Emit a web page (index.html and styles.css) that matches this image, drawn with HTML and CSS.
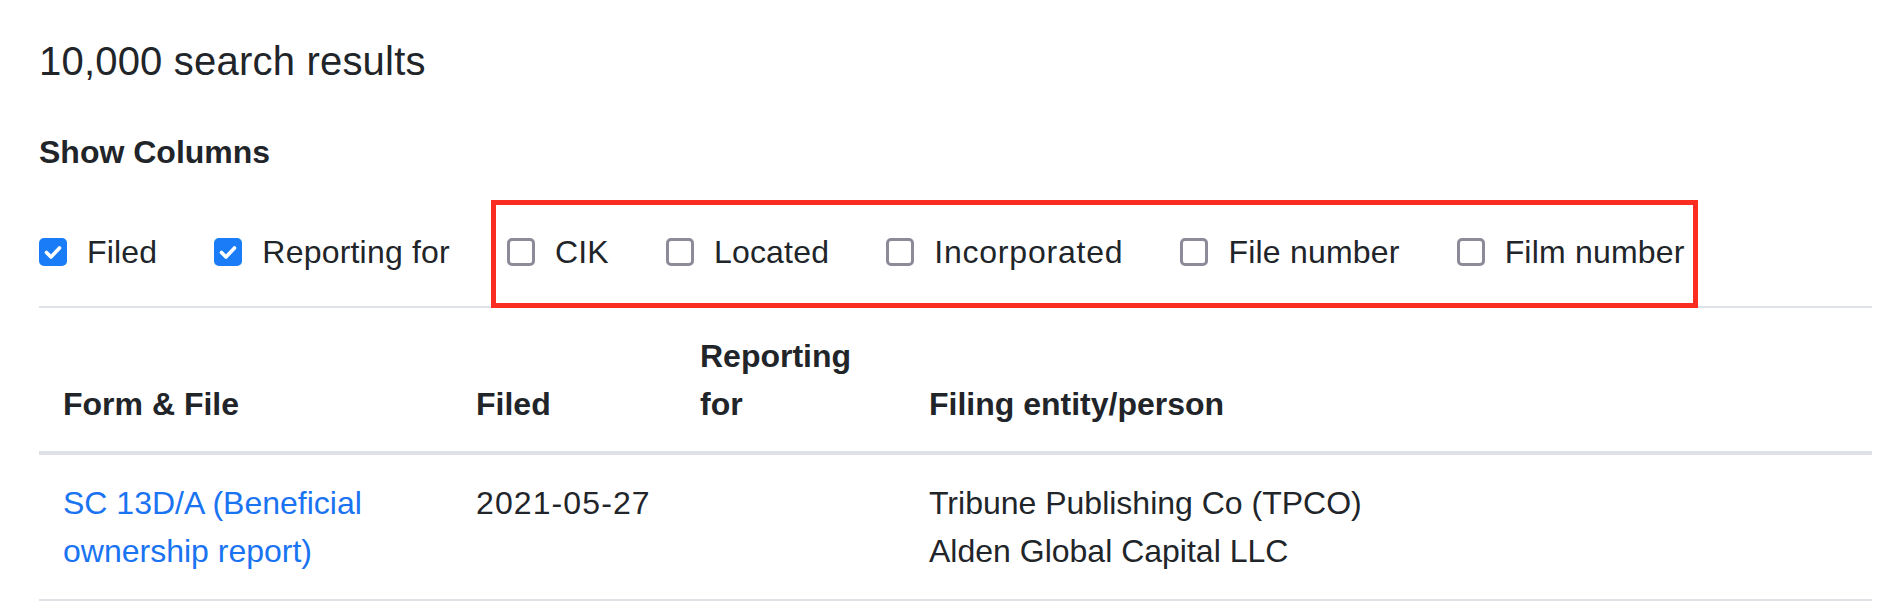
FILE: index.html
```html
<!DOCTYPE html>
<html lang="en">
<head>
<meta charset="utf-8">
<title>Search results</title>
<link rel="stylesheet" href="styles.css">
</head>
<body>
<main class="page">
  <h2 class="results-count">10,000 search results</h2>
  <section class="columns-picker">
    <h3 class="picker-title">Show Columns</h3>
    <div class="check-row">
      <label class="check-item">
        <span class="box box-on"><svg viewBox="0 0 28 28" width="28" height="28"><path d="M7.5 14.5l4.5 4.5l8.5-9" fill="none" stroke="#fff" stroke-width="3.6" stroke-linecap="round" stroke-linejoin="round"/></svg></span>
        <span class="check-text">Filed</span>
      </label>
      <label class="check-item">
        <span class="box box-on"><svg viewBox="0 0 28 28" width="28" height="28"><path d="M7.5 14.5l4.5 4.5l8.5-9" fill="none" stroke="#fff" stroke-width="3.6" stroke-linecap="round" stroke-linejoin="round"/></svg></span>
        <span class="check-text">Reporting for</span>
      </label>
      <div class="check-group highlighted">
        <label class="check-item"><span class="box"></span><span class="check-text">CIK</span></label>
        <label class="check-item"><span class="box"></span><span class="check-text">Located</span></label>
        <label class="check-item"><span class="box"></span><span class="check-text wide">Incorporated</span></label>
        <label class="check-item"><span class="box"></span><span class="check-text">File number</span></label>
        <label class="check-item"><span class="box"></span><span class="check-text">Film number</span></label>
      </div>
    </div>
  </section>
  <table class="results">
    <colgroup>
      <col class="c-form">
      <col class="c-filed">
      <col class="c-rep">
      <col>
    </colgroup>
    <thead>
      <tr>
        <th>Form &amp; File</th>
        <th>Filed</th>
        <th>Reporting for</th>
        <th>Filing entity/person</th>
      </tr>
    </thead>
    <tbody>
      <tr>
        <td><a class="form-link" href="#">SC 13D/A (Beneficial ownership report)</a></td>
        <td class="date">2021-05-27</td>
        <td></td>
        <td>
          <div>Tribune Publishing Co (TPCO)</div>
          <div>Alden Global Capital LLC</div>
        </td>
      </tr>
    </tbody>
  </table>
</main>
</body>
</html>
```
FILE: styles.css
```css
html, body {
  margin: 0;
  padding: 0;
  background: #ffffff;
}
body {
  font-family: "Liberation Sans", Arial, sans-serif;
  font-size: 32px;
  line-height: 48px;
  color: #212529;
}
.page {
  padding: 37px 26px 0 39px;
}
.results-count {
  margin: 0;
  font-size: 40px;
  line-height: 48px;
  font-weight: 400;
  letter-spacing: 0.2px;
}
.columns-picker {
  margin-top: 43px;
  padding-bottom: 30px;
  border-bottom: 2px solid #dee2e6;
}
.picker-title {
  margin: 0;
  font-size: 32px;
  line-height: 48px;
  font-weight: 700;
}
.check-row {
  margin-top: 52px;
  display: flex;
  align-items: center;
  gap: 57px;
}
.check-group {
  display: flex;
  align-items: center;
  gap: 57px;
}
.highlighted {
  position: relative;
}
.highlighted::before {
  content: "";
  position: absolute;
  top: -28px;
  bottom: -32px;
  left: -16px;
  right: -13px;
  border: 5px solid #fb2c20;
  pointer-events: none;
}
.check-item {
  display: flex;
  align-items: center;
  gap: 20px;
  white-space: nowrap;
}
.check-text {
  letter-spacing: 0.2px;
}
.check-text.wide {
  letter-spacing: 0.8px;
}
.box {
  box-sizing: border-box;
  width: 28px;
  height: 28px;
  border: 3px solid #8d8b99;
  border-radius: 5px;
  background: #fff;
  display: block;
  flex: none;
}
.box-on {
  border: none;
  background: #1a7cf7;
}
.box-on svg {
  display: block;
}
.results {
  width: 100%;
  border-collapse: collapse;
  table-layout: fixed;
}
.c-form { width: 413px; }
.c-filed { width: 224px; }
.c-rep { width: 229px; }
.results th {
  text-align: left;
  font-weight: 700;
  vertical-align: bottom;
  padding: 24px 24px 23px;
  border-bottom: 4px solid #dee2e6;
}
.results td {
  vertical-align: top;
  padding: 24px 24px 24px;
  border-bottom: 2px solid #dee2e6;
}
.results td.date {
  letter-spacing: 1.1px;
}
.form-link {
  color: #1a74f2;
  text-decoration: none;
}
```
